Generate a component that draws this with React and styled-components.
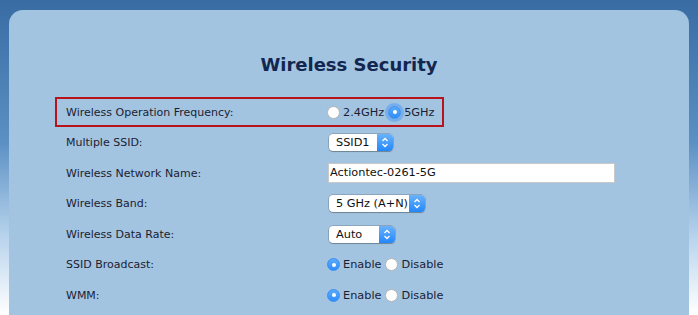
import React from "react";
import styled, { createGlobalStyle } from "styled-components";

const GlobalStyle = createGlobalStyle`
  html, body {
    margin: 0;
    padding: 0;
    height: 100%;
    overflow: hidden;
  }
  body {
    background: linear-gradient(180deg, #386ca3 0%, #5b90c4 45%, #b7d3ec 75%, #ffffff 100%);
    font-family: "DejaVu Sans", Verdana, sans-serif;
  }
`;

const Panel = styled.div`
  margin: 10px 9px 0;
  height: 305px;
  background: #a3c4e0;
  border-radius: 14px 14px 0 0;
  padding: 44px 0 0 46px;
  box-sizing: border-box;
`;

const Title = styled.h2`
  margin: 0 0 21px -46px;
  text-align: center;
  font-size: 18px;
  line-height: 22px;
  font-weight: bold;
  color: #12264f;
`;

const Form = styled.div`
  display: flex;
  flex-direction: column;
  gap: 0.5px;
`;

const Row = styled.div`
  display: grid;
  grid-template-columns: 261px 1fr;
  align-items: center;
  box-sizing: border-box;
  height: 30px;
  padding-left: 9px;
  border: 2px solid ${(p) => (p.$highlight ? "#b8121b" : "transparent")};
  width: ${(p) => (p.$highlight ? "389px" : "580px")};
`;

const Label = styled.span`
  font-size: 11px;
  color: #1b1d33;
  white-space: nowrap;
`;

const Controls = styled.div`
  display: flex;
  align-items: center;
  white-space: nowrap;
`;

const Radio = styled.span`
  width: 13px;
  height: 13px;
  border-radius: 50%;
  box-sizing: border-box;
  flex: none;
  display: inline-flex;
  align-items: center;
  justify-content: center;
  background: ${(p) => (p.$checked ? "linear-gradient(#5aaafc, #2f8ef9)" : "#fff")};
  border: 1px solid ${(p) => (p.$checked ? "#3b8ef0" : "#b4b4b4")};
  box-shadow: ${(p) => (p.$focus ? "0 0 0 3px rgba(79, 156, 245, 0.55)" : "none")};
  &::after {
    content: "";
    width: 4px;
    height: 4px;
    border-radius: 50%;
    background: #fff;
    display: ${(p) => (p.$checked ? "block" : "none")};
  }
`;

const RadioText = styled.span`
  font-size: 11.3px;
  color: #1b1d33;
  margin: 0 4px 0 3px;
`;

const Select = styled.div`
  display: inline-flex;
  align-items: stretch;
  height: 17px;
  width: ${(p) => p.$width}px;
  margin-left: 2px;
  border-radius: 4px;
  background: #fff;
  box-shadow: 0 0 0 0.5px rgba(0, 0, 0, 0.3), 0 1px 1px rgba(0, 0, 0, 0.2);
  overflow: hidden;
`;

const SelectText = styled.span`
  flex: 1;
  font-size: 11.3px;
  line-height: 17px;
  padding-left: 7px;
  color: #111;
  white-space: nowrap;
`;

const SelectButton = styled.span`
  width: 16px;
  flex: none;
  display: flex;
  align-items: center;
  justify-content: center;
  background: linear-gradient(#6ab2fb, #2387fa);
`;

const TextInput = styled.div`
  width: 287px;
  height: 20px;
  margin-left: 1px;
  box-sizing: border-box;
  background: #fff;
  border: 1px solid #c9c9c9;
  font-size: 11.3px;
  line-height: 18px;
  padding-left: 1px;
  color: #111;
`;

const Chevrons = () => (
  <svg width="8" height="11" viewBox="0 0 8 11">
    <path d="M1.5 4 L4 1.5 L6.5 4 M1.5 7 L4 9.5 L6.5 7" fill="none" stroke="#fff" strokeWidth="1.3" />
  </svg>
);

const Dropdown = ({ value, width }) => (
  <Select $width={width}>
    <SelectText>{value}</SelectText>
    <SelectButton>
      <Chevrons />
    </SelectButton>
  </Select>
);

const EnableDisable = () => (
  <Controls>
    <Radio $checked />
    <RadioText>Enable</RadioText>
    <Radio />
    <RadioText>Disable</RadioText>
  </Controls>
);

export default function App() {
  return (
    <>
      <GlobalStyle />
      <Panel>
        <Title>Wireless Security</Title>
        <Form>
          <Row $highlight>
            <Label>Wireless Operation Frequency:</Label>
            <Controls>
              <Radio />
              <RadioText>2.4GHz</RadioText>
              <Radio $checked $focus />
              <RadioText>5GHz</RadioText>
            </Controls>
          </Row>
          <Row>
            <Label>Multiple SSID:</Label>
            <Controls>
              <Dropdown value="SSID1" width={64} />
            </Controls>
          </Row>
          <Row>
            <Label>Wireless Network Name:</Label>
            <Controls>
              <TextInput>Actiontec-0261-5G</TextInput>
            </Controls>
          </Row>
          <Row>
            <Label>Wireless Band:</Label>
            <Controls>
              <Dropdown value="5 GHz (A+N)" width={96} />
            </Controls>
          </Row>
          <Row>
            <Label>Wireless Data Rate:</Label>
            <Controls>
              <Dropdown value="Auto" width={66} />
            </Controls>
          </Row>
          <Row>
            <Label>SSID Broadcast:</Label>
            <EnableDisable />
          </Row>
          <Row>
            <Label>WMM:</Label>
            <EnableDisable />
          </Row>
        </Form>
      </Panel>
    </>
  );
}
